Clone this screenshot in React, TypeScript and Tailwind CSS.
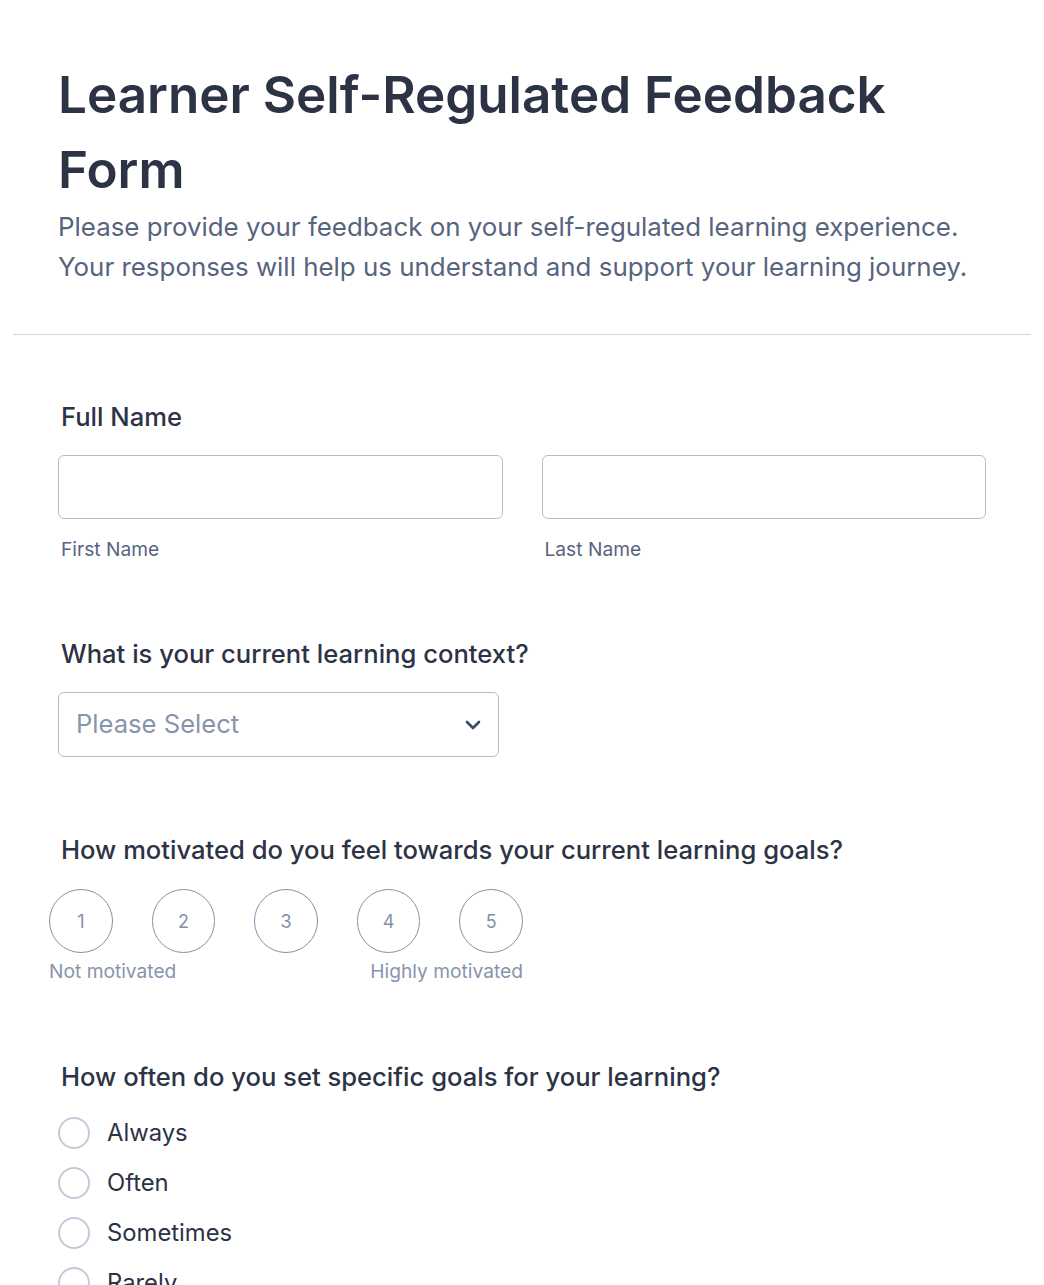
import React from "react";

const font = { fontFamily: "Inter, 'Noto Sans', sans-serif" };

export default function App() {
  return (
    <div className="min-h-screen bg-white text-[#2c3345]" style={font}>
      <div className="mx-[13px]">
        <header className="px-[45px] pt-[57px] pb-[47px] border-b border-[#d3d6e0]">
          <h1 className="text-[51.2px] leading-[75px] font-semibold text-[#2c3345]">
            Learner Self-Regulated Feedback Form
          </h1>
          <p className="text-[25.9px] leading-[40px] text-[#57647e]">
            Please provide your feedback on your self-regulated learning experience. Your responses will help us understand and support your learning journey.
          </p>
        </header>

        <div className="px-[45px]">
          {/* Full name */}
          <div className="mt-[64px]">
            <label className="block pl-[3px] text-[25.6px] leading-[36px] font-medium">Full Name</label>
            <div className="mt-[20px] grid grid-cols-2 gap-[39px]">
              <div>
                <div className="h-[64px] rounded-[6px] border border-[#b8bdc9] bg-white" />
                <div className="mt-[17px] pl-[3px] text-[19.2px] leading-[27px] text-[#57647e]">First Name</div>
              </div>
              <div>
                <div className="h-[64px] rounded-[6px] border border-[#b8bdc9] bg-white" />
                <div className="mt-[17px] pl-[3px] text-[19.2px] leading-[27px] text-[#57647e]">Last Name</div>
              </div>
            </div>
          </div>

          {/* Context */}
          <div className="mt-[73px]">
            <label className="block pl-[3px] text-[25.6px] leading-[36px] font-medium">What is your current learning context?</label>
            <div className="mt-[20px] w-[441px] h-[65px] rounded-[6px] border border-[#b8bdc9] flex items-center justify-between pl-[17px] pr-[16px]">
              <span className="text-[25.6px] text-[#8894ab]">Please Select</span>
              <svg width="18" height="12" viewBox="0 0 18 12" fill="none">
                <path d="M3 3l6 6 6-6" stroke="#3c4866" strokeWidth="2.6" strokeLinecap="round" strokeLinejoin="round" />
              </svg>
            </div>
          </div>

          {/* Motivation */}
          <div className="mt-[75px]">
            <label className="block pl-[3px] text-[25.6px] leading-[36px] font-medium">How motivated do you feel towards your current learning goals?</label>
            <div className="mt-[21px] -ml-[9px] w-[474px]">
              <div className="flex gap-[39px]">
                {[1, 2, 3, 4, 5].map((n) => (
                  <div
                    key={n}
                    className="w-[64px] h-[64px] rounded-full border border-[#8590a8] flex items-center justify-center text-[18px] text-[#8590a8]"
                  >
                    {n}
                  </div>
                ))}
              </div>
              <div className="mt-[5px] flex justify-between text-[19.2px] leading-[27px] text-[#8894ab]">
                <span>Not motivated</span>
                <span>Highly motivated</span>
              </div>
            </div>
          </div>

          {/* Goals */}
          <div className="mt-[74px]">
            <label className="block pl-[3px] text-[25.6px] leading-[36px] font-medium">How often do you set specific goals for your learning?</label>
            <div className="mt-[13px]">
              {["Always", "Often", "Sometimes", "Rarely", "Never"].map((o) => (
                <div key={o} className="h-[50px] flex items-center gap-[17px]">
                  <span className="w-[32px] h-[32px] rounded-full border-2 border-[#c3cad8] bg-white" />
                  <span className="text-[23.8px] text-[#2c3345]">{o}</span>
                </div>
              ))}
            </div>
          </div>
        </div>
      </div>
    </div>
  );
}
